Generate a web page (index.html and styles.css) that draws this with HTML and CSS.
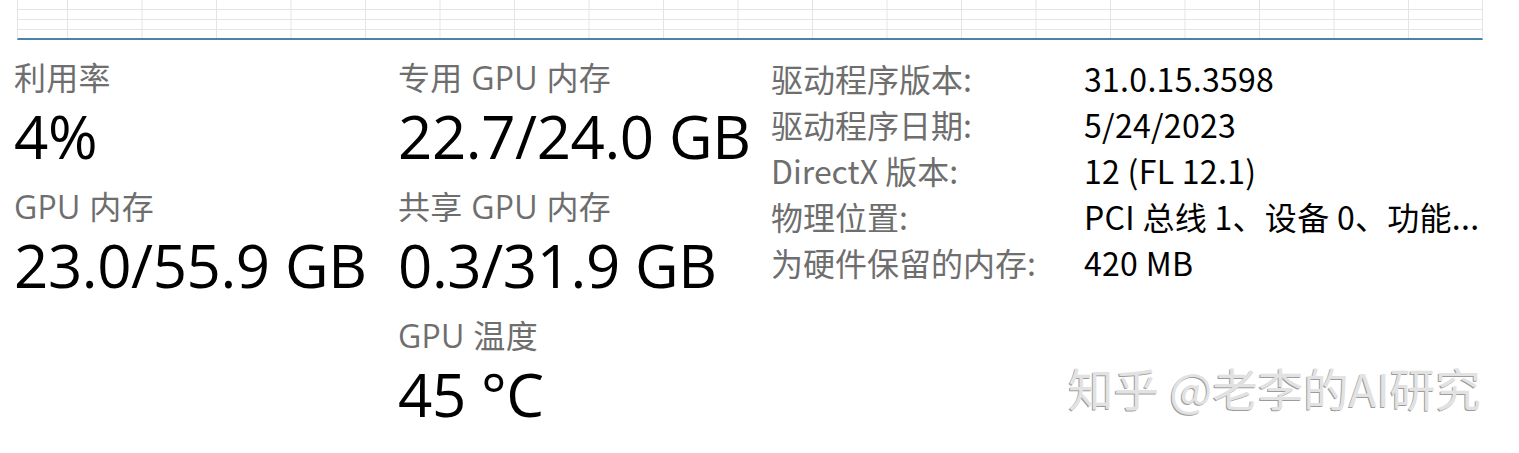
FILE: index.html
```html
<!DOCTYPE html>
<html lang="zh-CN">
<head>
    <meta charset="UTF-8">
    <meta name="viewport" content="width=device-width, initial-scale=1.0">
    <title>GPU 性能</title>
    <link rel="stylesheet" href="styles.css">
</head>
<body>
    <div class="page">
        <div class="graph"></div>

        <div class="stats">
            <div class="column column-main">
                <div class="stat">
                    <div class="stat-label">利用率</div>
                    <div class="stat-value">4%</div>
                </div>
                <div class="stat">
                    <div class="stat-label">GPU 内存</div>
                    <div class="stat-value">23.0/55.9 GB</div>
                </div>
            </div>

            <div class="column column-memory">
                <div class="stat">
                    <div class="stat-label">专用 GPU 内存</div>
                    <div class="stat-value">22.7/24.0 GB</div>
                </div>
                <div class="stat">
                    <div class="stat-label">共享 GPU 内存</div>
                    <div class="stat-value">0.3/31.9 GB</div>
                </div>
                <div class="stat">
                    <div class="stat-label">GPU 温度</div>
                    <div class="stat-value">45 °C</div>
                </div>
            </div>

            <div class="details">
                <div class="detail-label">驱动程序版本:</div>
                <div class="detail-value">31.0.15.3598</div>
                <div class="detail-label">驱动程序日期:</div>
                <div class="detail-value">5/24/2023</div>
                <div class="detail-label">DirectX 版本:</div>
                <div class="detail-value">12 (FL 12.1)</div>
                <div class="detail-label">物理位置:</div>
                <div class="detail-value">PCI 总线 1、设备 0、功能...</div>
                <div class="detail-label">为硬件保留的内存:</div>
                <div class="detail-value">420 MB</div>
            </div>
        </div>

        <div class="watermark">知乎 @老李的AI研究</div>
    </div>
</body>
</html>
```

FILE: styles.css
```css
:root {
    --label-color: #6e6e6e;
    --value-color: #000;
    --grid-line: #e4e4e4;
    --graph-line: #4b82a8;
}

* {
    margin: 0;
    padding: 0;
    box-sizing: border-box;
}

body {
    background-color: #fff;
    font-family: 'Open Sans', 'Noto Sans CJK SC', sans-serif;
    overflow: hidden;
}

.page {
    position: relative;
    width: 1519px;
    height: 453px;
}

.graph {
    margin-left: 17px;
    width: 1466px;
    height: 40px;
    border-left: 1px solid var(--grid-line);
    border-right: 1px solid var(--grid-line);
    border-bottom: 2px solid var(--graph-line);
    background-image:
        linear-gradient(to right, var(--grid-line) 1px, transparent 1px),
        linear-gradient(to bottom, var(--grid-line) 1px, transparent 1px);
    background-size: 74.5px 100%, 100% 10px;
    background-position: 49px 0, 0 9px;
}

.stats {
    display: flex;
    align-items: flex-start;
    padding-left: 14px;
    padding-top: 18px;
}

.column-main {
    width: 384px;
}

.column-memory {
    width: 373px;
}

.stat-label {
    font-size: 32px;
    line-height: 40px;
    color: var(--label-color);
    letter-spacing: 0.3px;
}

.stat-value {
    font-size: 60px;
    line-height: 89px;
    color: var(--value-color);
    letter-spacing: -0.4px;
    white-space: nowrap;
    margin-top: -6px;
    margin-bottom: 6px;
}

.details {
    display: grid;
    grid-template-columns: 313px auto;
    align-content: start;
    font-family: 'Noto Sans CJK SC', sans-serif;
    font-size: 32px;
    line-height: 46px;
    margin-top: -3px;
}

.detail-label {
    color: var(--label-color);
}

.detail-value {
    color: var(--value-color);
    white-space: nowrap;
    letter-spacing: 0.3px;
}

.watermark {
    position: absolute;
    left: 1068px;
    top: 359px;
    font-family: 'Noto Sans CJK SC', sans-serif;
    font-size: 45.5px;
    line-height: 56px;
    color: #e2e2e2;
    text-shadow: -1px 1px 0 #9c9c9c;
    white-space: nowrap;
}
```
